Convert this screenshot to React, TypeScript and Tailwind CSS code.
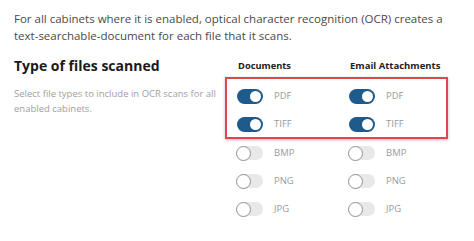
import React from "react";

const font = { fontFamily: '"Open Sans", "Noto Sans", Arial, sans-serif' };

function Toggle({ on }: { on?: boolean }) {
  if (on) {
    return (
      <span className="relative inline-flex items-center w-[26px] h-[15px] rounded-full bg-[#1f5a8d] shrink-0">
        <span className="absolute right-[2px] w-[11px] h-[11px] rounded-full bg-white" />
      </span>
    );
  }
  return (
    <span className="relative inline-flex items-center w-[26px] h-[14px] rounded-full bg-[#e8e8e8] shrink-0">
      <span className="absolute -left-[1px] w-[15px] h-[15px] rounded-full bg-white border-[1.5px] border-[#8f8f8f]" />
    </span>
  );
}

function Cell({ on, label }: { on?: boolean; label: string }) {
  return (
    <div className="flex items-center gap-[11px]">
      <Toggle on={on} />
      <span className="text-[9.5px] text-[#9b9b9b]">{label}</span>
    </div>
  );
}

function Row({ on, label }: { on?: boolean; label: string }) {
  return (
    <div className="grid grid-cols-[112px_112px] h-[28px] items-center">
      <Cell on={on} label={label} />
      <Cell on={on} label={label} />
    </div>
  );
}

export default function App() {
  return (
    <div className="w-[474px] h-[241px] bg-white overflow-hidden" style={font}>
      <div className="px-[14px] pt-[10px]">
        <p className="w-[432px] text-[11.5px] leading-[17px] text-[#4a4a4a]">
          For all cabinets where it is enabled, optical character recognition (OCR) creates a text-searchable-document for each file that it scans.
        </p>

        <div className="flex mt-[12px]">
          <div className="w-[223px] shrink-0">
            <h2 className="text-[14px] leading-[20px] font-bold text-[#1a1a1a]">Type of files scanned</h2>
            <p className="mt-[10px] w-[206px] text-[9.5px] leading-[15px] text-[#a0a0a0]">
              Select file types to include in OCR scans for all enabled cabinets.
            </p>
          </div>

          <div className="flex flex-col">
            <div className="grid grid-cols-[112px_112px] h-[18px] items-center pl-[1px] mt-[1px] mb-[2px] font-bold text-[#222]">
              <span className="text-[9.3px]">Documents</span>
              <span className="text-[9.5px]">Email Attachments</span>
            </div>
            <div className="-ml-[12px] w-[223px] border-2 border-[#e0474c] pl-[10px] pt-[3px] shadow-[0_1px_3px_rgba(0,0,0,0.25)]">
              <Row on label="PDF" />
              <div className="-mb-[1px]">
                <Row on label="TIFF" />
              </div>
            </div>
            <Row label="BMP" />
            <Row label="PNG" />
            <Row label="JPG" />
          </div>
        </div>
      </div>
    </div>
  );
}
